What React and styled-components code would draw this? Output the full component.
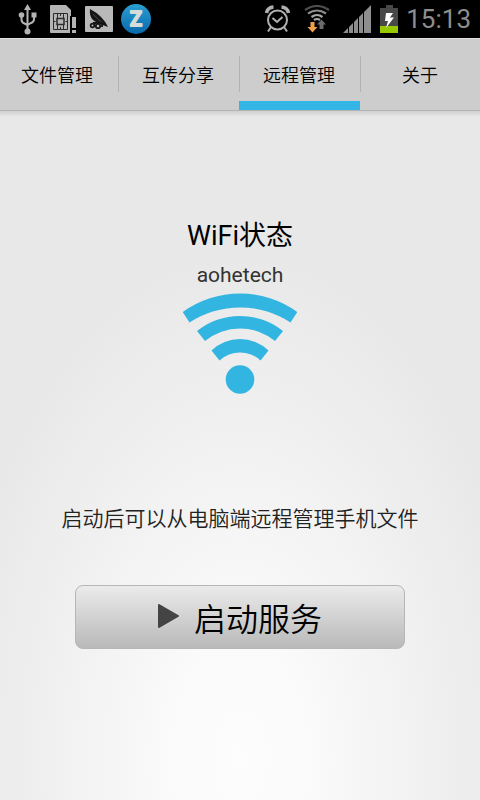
import React, { useState } from "react"
import styled, { createGlobalStyle } from "styled-components"

const TABS = ["文件管理", "互传分享", "远程管理", "关于"]

const UsbIcon = () => (
  <svg width="24" height="32" viewBox="0 0 24 32" fill="none" stroke="#b4b4b4" strokeWidth="2">
    <path d="M9.500 7v20M3.500 13v3.500q0 3 3 4l3 1.500M16 13v3q0 3-3 4l-3.500 2" />
    <path d="M9.500 1l3.500 6h-7zM13.500 9.500h5v5h-5z" fill="#b4b4b4" stroke="none" />
    <circle cx="3.500" cy="12" r="2.800" fill="#b4b4b4" stroke="none" />
    <circle cx="9.500" cy="28.500" r="3" fill="#b4b4b4" stroke="none" />
  </svg>
)

const SimIcon = () => (
  <svg width="27" height="30" viewBox="0 0 27 30">
    <path d="M0 2q0-1 1-1h15l5 5v6h-1v17H1q-1 0-1-1z" fill="#b4b4b4" />
    <path d="M22 13h4v11h-4zM22 26h4v3h-4z" fill="#b4b4b4" />
    <g fill="none" stroke="#2b2b2b">
      <path d="M3.500 9.500h14v16h-14z" />
      <path d="M7 14.500h7v6H7z" strokeWidth="1.500" />
      <path d="M7.500 10v4M10.500 10v2M13.500 10v4M7.500 21v4M10.500 23v2M13.500 21v4M3.500 17.500h2M15.500 17.500h2" />
    </g>
  </svg>
)

const DishIcon = () => (
  <svg width="28" height="28" viewBox="0 0 28 28">
    <rect y="1" width="28" height="26" rx="1" fill="#b9b9b9" />
    <path d="M5 4q-1 7 3 11 3 3 15 7-2-5-7-10Q11 7 5 4z" fill="#151515" />
    <path d="M8 9q5 6 10 9" fill="none" stroke="#444" />
    <g fill="none" stroke="#151515" strokeWidth="1.800">
      <circle cx="7.500" cy="20.500" r="1.800" />
      <circle cx="13" cy="21" r="2.200" />
      <path d="M8 18h9v4" />
    </g>
  </svg>
)

const ZIcon = () => (
  <svg width="30" height="30" viewBox="0 0 30 30">
    <defs>
      <linearGradient id="zFill" x1="0" y1="0" x2="0" y2="1">
        <stop offset="0" stopColor="#2a9fd2" />
        <stop offset="1" stopColor="#0968ac" />
      </linearGradient>
    </defs>
    <circle cx="15" cy="15" r="15" fill="url(#zFill)" />
    <text
      x="15"
      y="22"
      textAnchor="middle"
      fontFamily="Roboto, sans-serif"
      fontSize="20"
      fontWeight="500"
      fill="#d5ddd9"
      stroke="#d5ddd9"
      strokeWidth="2"
      strokeLinejoin="round"
    >
      Z
    </text>
  </svg>
)

const AlarmIcon = () => (
  <svg width="31" height="28" viewBox="0 0 31 28" fill="none" stroke="#b0b0b0" strokeWidth="2">
    <circle cx="12.500" cy="15" r="9.500" />
    <path d="M7.500 13l4.500 4 5.500-5M6 22l-3 4.500M19 22l3 4.500" />
    <path d="M1.500 8q1-5.500 7-6M23.500 8q-1-5.500-7-6" strokeWidth="3.500" />
  </svg>
)

const WifiTrafficIcon = () => (
  <svg width="31" height="28" viewBox="0 0 31 28" fill="none" strokeWidth="2.200">
    <path d="M1 5q12-8 24 0" stroke="#4e4e4e" />
    <path d="M4 8.500q9-6 18 0" stroke="#8c8c8c" />
    <path d="M7.500 12q5.500-4 11 0" stroke="#a8a8a8" />
    <path d="M10 15q3-2 6 0" stroke="#a8a8a8" />
    <path d="M6.500 17h4v5h3l-5 5.500-5-5.500h3z" fill="#f0a04b" />
    <path d="M15.500 24v-4.500H13l4.500-5 4.500 5h-2.500V24z" fill="#6b6b6b" />
  </svg>
)

const SignalIcon = () => (
  <svg width="29" height="29" viewBox="0 0 29 29" fill="#8e8e8e">
    <path d="M0 28l5-5v5zM6 28v-6l4-4v10zM11 28V17l4-4v15zM16 28V12l4-4v20zM21 28V7l7-7v28z" />
  </svg>
)

const BatteryIcon = () => (
  <svg width="18" height="28" viewBox="0 0 18 28">
    <path d="M6 0h7v3h5v25H0V3h6z" fill="#484848" />
    <path d="M0 21h18v7H0z" fill="#96c900" />
    <path d="M6 8h7l-3 4.500h4L6 23l2-7H5z" fill="#fff" />
  </svg>
)

const WifiIcon = () => (
  <svg width="116" height="102" viewBox="0 0 116 102" fill="#33b5e1">
    <path d="M0.700 20A98 98 0 0 1 115.300 20L108.500 30.500A92 92 0 0 0 7.500 30.500z" />
    <path d="M15 39A69 69 0 0 1 101 39L93 49A55 55 0 0 0 23 49z" />
    <path d="M29.500 58.500A41 41 0 0 1 86.500 58.500L78.500 68.500A30 30 0 0 0 37.500 68.500z" />
    <circle cx="58" cy="87.500" r="14.300" />
  </svg>
)

const PlayIcon = () => (
  <svg width="22" height="26" viewBox="0 0 22 26">
    <path d="M1 1v22L20 12z" fill="#444" stroke="#444" strokeWidth="2" strokeLinejoin="round" />
  </svg>
)

const App = () => {
  const [active, setActive] = useState(2)

  return (
    <Screen>
      <GlobalStyle />
      <StatusBar>
        <StatusGroup>
          <UsbIcon />
          <SimIcon />
          <DishIcon />
          <ZIcon />
        </StatusGroup>
        <StatusGroup>
          <AlarmIcon />
          <WifiTrafficIcon />
          <SignalIcon />
          <BatteryIcon />
          <Clock>15:13</Clock>
        </StatusGroup>
      </StatusBar>
      <TabBar>
        <TabList>
          {TABS.map((label, i) => (
            <Tab key={label} $active={i === active} onClick={() => setActive(i)}>
              <TabLabel $divider={i > 0}>{label}</TabLabel>
            </Tab>
          ))}
        </TabList>
      </TabBar>
      <Content>
        <Title>WiFi状态</Title>
        <Ssid>aohetech</Ssid>
        <WifiIcon />
        <Message>启动后可以从电脑端远程管理手机文件</Message>
        <StartButton>
          <PlayIcon />
          启动服务
        </StartButton>
      </Content>
    </Screen>
  )
}

const GlobalStyle = createGlobalStyle`
  body {
    margin: 0;
    font-family: Roboto, "Noto Sans CJK SC", sans-serif;
    color: #000;
  }

  svg {
    display: block;
    flex-shrink: 0;
  }
`

const Screen = styled.div`
  display: flex;
  flex-direction: column;
  min-height: 100vh;
`

const StatusBar = styled.header`
  display: flex;
  align-items: center;
  justify-content: space-between;
  height: 38px;
  padding: 0 9px 0 18px;
  background: #000;
`

const StatusGroup = styled.div`
  display: flex;
  align-items: center;
  gap: 8px;
`

const Clock = styled.time`
  font-size: 26px;
  line-height: 36px;
  color: #8e8e8e;
`

const TabBar = styled.nav`
  overflow: hidden;
  background: #cdcdcd;
  border-top: 1px solid #dedede;
  border-bottom: 1px solid #b4b4b4;
`

const TabList = styled.div`
  display: grid;
  grid-template-columns: repeat(4, 1fr);
  margin: 0 -1px 0 -3px;
`

const Tab = styled.button`
  height: 71px;
  padding: 8px 0 0;
  border: 0;
  border-bottom: 9px solid ${({ $active }) => ($active ? "#33b5e5" : "transparent")};
  background: none;
  font-family: "Noto Sans CJK SC", sans-serif;
  font-size: 18px;
  font-weight: 350;
  color: #000;
`

const TabLabel = styled.span`
  display: block;
  height: 36px;
  padding-right: 2px;
  border-left: 1px solid ${({ $divider }) => ($divider ? "#b2b2b2" : "transparent")};
  line-height: 36px;
`

const Content = styled.main`
  flex: 1;
  display: flex;
  flex-direction: column;
  align-items: center;
  padding: 105px 24px 24px;
  background:
    linear-gradient(rgba(0, 0, 0, 0.1), transparent 6px),
    radial-gradient(ellipse 60% 74% at 50% 94%, #fdfdfd 0%, #fafafa 25%, #e8e8e8 100%);
`

const Title = styled.h1`
  margin: 0;
  font-size: 27px;
  font-weight: 400;
  line-height: 40px;
`

const Ssid = styled.p`
  margin: 4px 0 2px;
  font-size: 21px;
  line-height: 30px;
  color: #333;
`

const Message = styled.p`
  margin: 107px 0 52px;
  font-family: "Noto Sans CJK SC", sans-serif;
  font-size: 21px;
  font-weight: 350;
  line-height: 32px;
  color: #222;
`

const StartButton = styled.button`
  display: flex;
  align-items: center;
  justify-content: center;
  gap: 14px;
  width: 100%;
  max-width: 330px;
  height: 64px;
  border: 1px solid #b6b6b6;
  border-radius: 8px;
  background: linear-gradient(#ebebeb, #b9b9b9);
  font-family: "Noto Sans CJK SC", sans-serif;
  font-size: 32px;
  font-weight: 350;
  color: #000;
`

export default App
